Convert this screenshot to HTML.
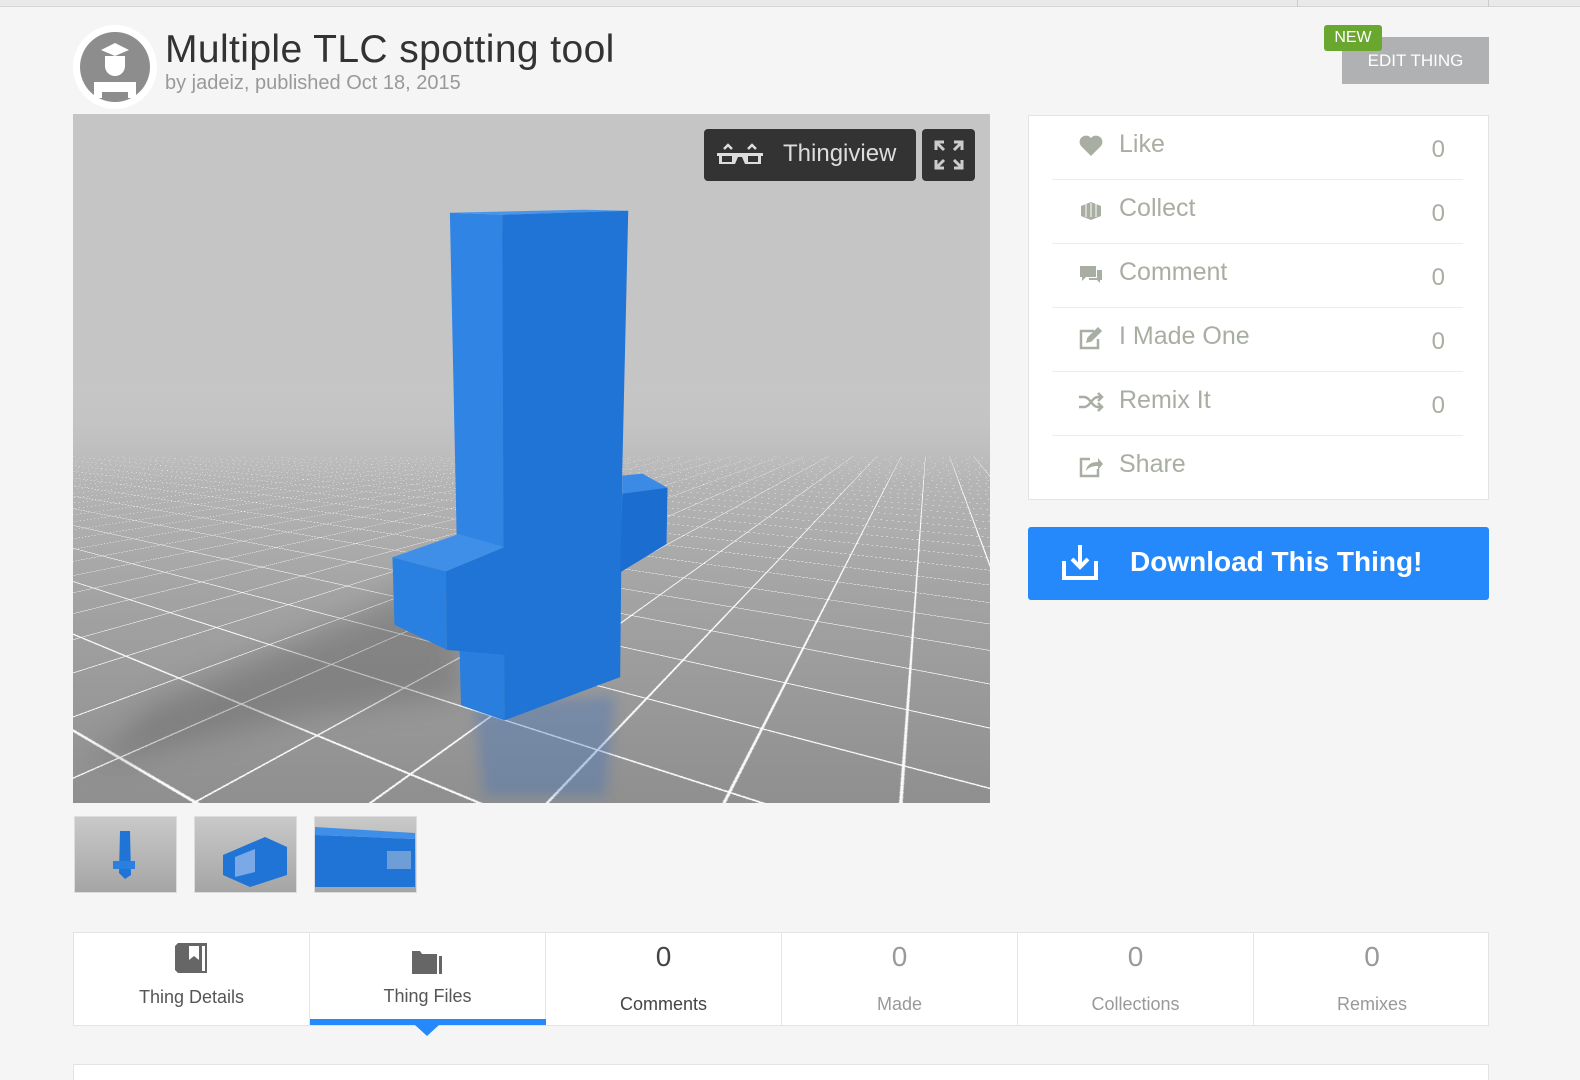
<!DOCTYPE html>
<html><head><meta charset="utf-8">
<style>
*{box-sizing:border-box;margin:0;padding:0}
html,body{overflow:hidden;width:1580px;height:1080px}
body{background:#f5f5f5;font-family:"Liberation Sans",sans-serif;position:relative;overflow:hidden}
.abs{position:absolute}
.topbar{left:0;top:0;width:1580px;height:7px;background:#e9e9e9;border-bottom:1px solid #d6d6d6}
.title{left:165px;top:28px;font-size:39px;color:#333;letter-spacing:.4px}
.sub{left:165px;top:72px;font-size:20px;color:#999}
.edit{left:1342px;top:37px;width:147px;height:47px;background:#b0b1b2;color:#fff;font-size:17px;line-height:47px;text-align:center}
.new{left:1324px;top:25px;width:58px;height:26px;background:#6aa72f;color:#fff;font-size:16px;line-height:26px;text-align:center;border-radius:3px}
.viewer{left:73px;top:114px;width:917px;height:689px;overflow:hidden;contain:paint;background:linear-gradient(#c5c5c5 0%,#c7c7c7 40%,#b9b9b9 50%,#a3a3a3 70%,#8f8f8f 100%);perspective:600px;perspective-origin:50% 500px}
.plane{position:absolute;left:-3042px;top:-3311px;width:7000px;height:4500px;transform-origin:3500px 4000px;transform:rotateX(70.5deg);
background-image:repeating-linear-gradient(32deg,rgba(255,255,255,.95) 0 3px,transparent 3px 150px),repeating-linear-gradient(122deg,rgba(255,255,255,.95) 0 3px,transparent 3px 150px)}
.fade{left:0;top:0;width:917px;height:689px;background:linear-gradient(#c5c5c5 0px,#c5c5c5 270px,rgba(197,197,197,.7) 305px,rgba(190,190,190,0) 370px)}
.tv{left:631px;top:15px;width:212px;height:52px;background:#333;border-radius:4px;color:#ddd;font-size:24px}
.fs{left:849px;top:15px;width:53px;height:52px;background:#333;border-radius:4px}
.panel{left:1028px;top:115px;width:461px;height:385px;background:#fff;border:1px solid #e3e3e3}
.row{position:absolute;left:23px;width:411px;height:64px;border-bottom:1px solid #ececec;color:#a9aea3;font-size:25px}
.row .lbl{position:absolute;left:67px;top:14px}
.row .n{position:absolute;right:18px;top:20px;font-size:24px}
.row svg{position:absolute;left:26px;top:18px}
.dl{left:1028px;top:527px;width:461px;height:73px;background:#2589fb;color:#fff;font-size:28px;font-weight:bold;border-radius:3px}
.thumb{top:816px;width:103px;height:77px;border:1px solid #ddd;overflow:hidden;background:linear-gradient(#c9c9c9,#a5a5a5)}
.tabs{left:73px;top:932px;width:1416px;height:94px;background:#fff;border:1px solid #e3e3e3}
.tab{position:absolute;top:0;width:236px;height:92px;border-right:1px solid #e6e6e6;text-align:center;color:#555;font-size:18px}
.tab .num{position:absolute;left:0;right:0;top:8px;font-size:28px}
.tab .t{position:absolute;left:0;right:0;top:55px}
.bottom{left:73px;top:1064px;width:1416px;height:16px;background:#fff;border:1px solid #e3e3e3;border-bottom:none}
</style></head><body>
<div class="abs topbar"></div>
<div class="abs" style="left:1297px;top:0;width:1px;height:7px;background:#ccc"></div>
<div class="abs" style="left:1488px;top:0;width:1px;height:7px;background:#ccc"></div>

<svg class="abs" style="left:72px;top:24px" width="86" height="86" viewBox="0 0 86 86">
<circle cx="43" cy="43" r="42" fill="#fff"/>
<circle cx="43" cy="43" r="35" fill="#8d8d8d"/>
<path d="M29 26 L43 19 L57 26 L43 32 Z" fill="#fff"/>
<path d="M33 32 h20 v10 a10 10 0 0 1 -20 0 Z" fill="#fff"/>
<path d="M22 58 h42 v16 h-8 v-6 h-26 v6 h-8 Z" fill="#fff"/>
</svg>
<div class="abs title">Multiple TLC spotting tool</div>
<div class="abs sub">by jadeiz, published Oct 18, 2015</div>
<div class="abs edit">EDIT THING</div>
<div class="abs new">NEW</div>

<div class="abs viewer">
 <div class="plane"></div>
 <div class="abs fade"></div>
 <svg class="abs" style="left:0;top:0" width="917" height="689" viewBox="72 113 910 684" preserveAspectRatio="none">
  <defs><filter id="bl"><feGaussianBlur stdDeviation="14"/></filter><filter id="bl2"><feGaussianBlur stdDeviation="6"/></filter></defs>
  <path d="M450 560 L380 600 L150 700 L90 760 L300 710 L460 690 Z" fill="#555" opacity=".35" filter="url(#bl)"/>
  <path d="M470 700 L610 690 L600 790 L480 790 Z" fill="#3a6fc0" opacity=".35" filter="url(#bl2)"/>
  <polygon points="446,211 498,213 502,545 453,545" fill="#2f84e4"/>
  <polygon points="446,211 498,213 623,209 580,208" fill="#4a95ea"/>
  <polygon points="498,213 623,209 617,470 615,672 500,715" fill="#1f74d6"/>
  <polygon points="617,472 637,470 662,484 617,492" fill="#3a8ae6"/>
  <polygon points="617,490 662,484 661,540 615,568" fill="#1b6ecf"/>
  <polygon points="455,620 500,640 500,715 457,700" fill="#2a7fde"/>
  <polygon points="389,553 455,530 500,543 442,567" fill="#3f8fe8"/>
  <polygon points="389,553 442,567 443,645 391,620" fill="#2a80e0"/>
  <polygon points="442,567 500,543 500,650 443,645" fill="#1f74d6"/>
 </svg>
 <div class="abs tv">
  <svg class="abs" style="left:12px;top:14px" width="48" height="24" viewBox="0 0 48 24">
   <path d="M8 6 L12 2 L16 6 M32 6 L36 2 L40 6" stroke="#ddd" stroke-width="2.5" fill="none"/>
   <path d="M1 10 H47 V13 H45 V21 H29 L26 14 H22 L19 21 H3 V13 H1 Z" fill="#ddd"/>
   <rect x="6" y="13" width="10" height="6" fill="#333"/><rect x="32" y="13" width="10" height="6" fill="#333"/>
  </svg>
  <span class="abs" style="left:79px;top:11px">Thingiview</span>
 </div>
 <div class="abs fs">
  <svg class="abs" style="left:12px;top:11px" width="30" height="30" viewBox="0 0 30 30" fill="none" stroke="#ccc" stroke-width="3">
   <path d="M2 10V2h8M2 2l8 8M28 10V2h-8M28 2l-8 8M2 20v8h8M2 28l8-8M28 20v8h-8M28 28l-8-8"/>
  </svg>
 </div>
</div>

<div class="abs panel">
 <div class="row" style="top:0"><svg width="26" height="24" viewBox="0 0 26 24"><path d="M13 22 L3 12 A6 6 0 0 1 13 4 A6 6 0 0 1 23 12 Z" fill="#a9aea3"/></svg><span class="lbl">Like</span><span class="n">0</span></div>
 <div class="row" style="top:64px"><svg width="26" height="24" viewBox="0 0 26 24"><path d="M3 8l10-4 10 4v10l-10 4-10-4z" fill="#a9aea3"/><path d="M8 6v13M13 5v14M18 6v13" stroke="#fff" stroke-width="1"/></svg><span class="lbl">Collect</span><span class="n">0</span></div>
 <div class="row" style="top:128px"><svg width="26" height="24" viewBox="0 0 26 24"><path d="M2 4h16v11H8l-4 4v-4H2z" fill="#a9aea3"/><path d="M19 8h5v10h-2v3l-3-3h-8v-2h8z" fill="#a9aea3"/></svg><span class="lbl">Comment</span><span class="n">0</span></div>
 <div class="row" style="top:192px"><svg width="26" height="24" viewBox="0 0 26 24" fill="none" stroke="#a9aea3" stroke-width="2.5"><path d="M16 5H3v17h17v-9"/><path d="M9 16l1-4 10-10 3 3-10 10z" fill="#a9aea3" stroke-width="1.5"/></svg><span class="lbl">I Made One</span><span class="n">0</span></div>
 <div class="row" style="top:256px"><svg width="26" height="24" viewBox="0 0 26 24" fill="none" stroke="#a9aea3" stroke-width="2.5"><path d="M1 7h5c6 0 8 10 14 10h3M1 17h5c6 0 8-10 14-10h3"/><path d="M20 3l4 4-4 4M20 13l4 4-4 4"/></svg><span class="lbl">Remix It</span><span class="n">0</span></div>
 <div class="row" style="top:320px;border-bottom:none"><svg width="26" height="24" viewBox="0 0 26 24" fill="none" stroke="#a9aea3" stroke-width="2.5"><path d="M12 5H3v17h17v-7"/><path d="M8 17c1-7 6-9 12-9V4l5 6-5 6v-4c-5 0-9 1-12 5z" fill="#a9aea3" stroke="none"/></svg><span class="lbl">Share</span></div>
</div>

<div class="abs dl">
 <svg class="abs" style="left:33px;top:16px" width="38" height="38" viewBox="0 0 38 38" fill="none" stroke="#fff" stroke-width="4">
  <path d="M3 18v17h32V18"/><path d="M19 2v22M11 16l8 8 8-8"/>
 </svg>
 <span class="abs" style="left:102px;top:19px">Download This Thing!</span>
</div>

<div class="abs thumb" style="left:74px"><svg width="103" height="77"><polygon points="45,14 55,14 56,58 50,62 44,56" fill="#1f74d6"/><rect x="38" y="44" width="22" height="8" fill="#2a80e0"/></svg></div>
<div class="abs thumb" style="left:194px"><svg width="103" height="77"><polygon points="28,38 70,20 92,30 92,58 55,70 28,58" fill="#1f74d6"/><polygon points="40,40 60,32 60,55 40,60" fill="#7aa9e6"/></svg></div>
<div class="abs thumb" style="left:314px"><svg width="103" height="77"><polygon points="0,18 100,22 100,70 0,70" fill="#1f74d6"/><polygon points="0,10 100,16 100,22 0,18" fill="#3f8fe8"/><rect x="72" y="34" width="24" height="18" fill="#6e9ed8"/></svg></div>

<div class="abs tabs">
 <div class="tab" style="left:0">
  <svg class="abs" style="left:101px;top:10px" width="32" height="30" viewBox="0 0 32 30"><path d="M0 3l3-3h29v30H3l-3-3z" fill="#666"/><path d="M14 3h10v14l-5-4-5 4z" fill="#fff"/><path d="M27 3h3v25h-3z" fill="#fff"/></svg>
  <div class="t" style="top:54px">Thing Details</div></div>
 <div class="tab" style="left:236px">
  <svg class="abs" style="left:102px;top:15px" width="30" height="26" viewBox="0 0 30 26"><path d="M0 3h8l2 3h15v20H0z" fill="#666"/><path d="M27 8h3v18h-3z" fill="#666"/></svg>
  <div class="t" style="top:53px">Thing Files</div>
  <div class="abs" style="left:0;top:86px;width:236px;height:6px;background:#2589fb"></div></div>
 <div class="tab" style="left:472px"><div class="num" style="color:#444">0</div><div class="t" style="top:61px;color:#444">Comments</div></div>
 <div class="tab" style="left:708px;color:#999"><div class="num">0</div><div class="t" style="top:61px">Made</div></div>
 <div class="tab" style="left:944px;color:#999"><div class="num">0</div><div class="t" style="top:61px">Collections</div></div>
 <div class="tab" style="left:1180px;border-right:none;color:#999"><div class="num">0</div><div class="t" style="top:61px">Remixes</div></div>
</div>
<svg class="abs" style="left:415px;top:1025px" width="24" height="12"><polygon points="0,0 24,0 12,11" fill="#2589fb"/></svg>
<div class="abs bottom"></div>
</body></html>
